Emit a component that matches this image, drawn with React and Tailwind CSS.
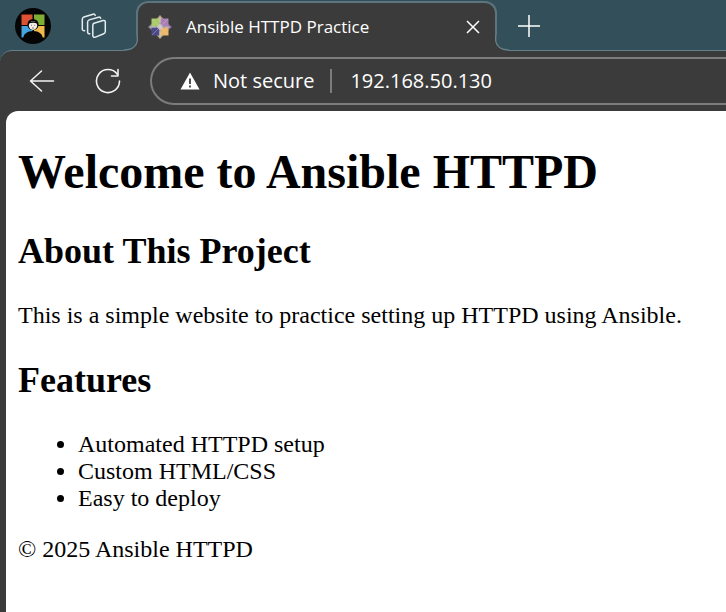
import React, { useState } from 'react';

const features = ['Automated HTTPD setup', 'Custom HTML/CSS', 'Easy to deploy'];

const ProfileIcon = () => (
  <svg viewBox="0 0 36 36" className="h-9 w-9" aria-hidden="true">
    <circle cx="18" cy="18" r="18" fill="#050505" />
    <path d="M6.500 6.500h11v10.500h-11z" fill="#dd5233" />
    <path d="M19 6.500h10.500V17H19z" fill="#7fae35" />
    <path d="M6.500 18h11v11.500h-11z" fill="#45a3e0" />
    <path d="M19 18h10.500v11.500H19z" fill="#f0b94a" />
    <path d="M8 31c.5-5 4-8 10-8s9.500 3 10 8c-5 4-15 4-20 0z" fill="#050505" />
    <circle cx="18" cy="16.500" r="5.600" fill="#050505" />
    <ellipse cx="18" cy="17.500" rx="4.200" ry="4.400" fill="#f4efe9" />
    <path d="M13.500 15.500c1-3 8-3 9 0-3-1-6-1-9 0z" fill="#050505" />
    <path d="M16 17.300h1M19.200 17.300h1M17 20h2" stroke="#555" strokeWidth="0.800" />
  </svg>
);

const WorkspacesIcon = () => (
  <svg viewBox="0 0 26 26" className="h-[26px] w-[26px]" fill="none" stroke="#e6ecee" strokeWidth="1.500" strokeLinejoin="round" strokeLinecap="round" aria-hidden="true">
    <path d="M13 10.200l9-2.700c1.300-.4 2.300.3 2.300 1.600v9.400c0 1.100-.6 1.900-1.600 2.300l-8.200 3.300c-1.600.6-2.700-.1-2.700-1.600v-10c0-1.200.3-1.900 1.200-2.300z" />
    <path d="M8.800 20.800c-1.400.1-2.200-.6-2.200-1.900V9.200c0-1.200.5-1.900 1.600-2.300l9.300-2.700c1.200-.3 1.900.1 2.200 1" />
    <path d="M3.600 17.700c-1.500.1-2.300-.6-2.300-1.900V6.300c0-1.200.5-1.900 1.600-2.300L12 1.200c1.200-.3 1.900.1 2.200 1" />
  </svg>
);

const Favicon = () => (
  <svg viewBox="0 0 24 24" className="h-6 w-6 shrink-0" aria-hidden="true">
    <path d="M12 0l3.500 4L12 8.500 8.500 4z" fill="#b59c7c" />
    <path d="M24 12l-4 3.500-4.500-3.500L20 8.500z" fill="#86689a" />
    <path d="M12 24l-3.500-4 3.500-4.500 3.500 4.500z" fill="#b5a987" />
    <path d="M0 12l4-3.500L8.500 12 4 15.500z" fill="#8f88a3" />
    <path d="M3.500 3.500h8v8h-8z" fill="#a9cc66" />
    <path d="M12.500 3.500h8v8h-8z" fill="#a880b4" />
    <path d="M3.500 12.500h8v8h-8z" fill="#4b4988" />
    <path d="M12.500 12.500h8v8h-8z" fill="#edb766" />
    <path d="M4 4l16 16M20 4L4 20" stroke="#ddd5d2" strokeWidth="0.700" opacity="0.500" />
    <path d="M12 2v20M2 12h20" stroke="#ddd5d8" strokeWidth="1.200" opacity="0.800" />
    <path d="M12 8.500l3.500 3.500-3.500 3.500L8.500 12z" fill="#dcd3d8" opacity="0.700" />
  </svg>
);

const TabFlare = ({ className }) => (
  <svg viewBox="0 0 14 16" className={`absolute bottom-0 h-4 w-[14px] ${className}`} aria-hidden="true">
    <path d="M14 16H0v-1c8 0 12-4 12.500-12V0H14z" fill="#3b3b3b" />
    <path d="M0 15c8 0 13.500-4 13.500-12V0" fill="none" stroke="#64808a" strokeWidth="1.500" />
  </svg>
);

const TabBar = () => (
  <div className="flex h-[51px] bg-[#33505a]">
    <div className="flex w-[136px] shrink-0 items-center gap-[30px] pl-[15px]">
      <button type="button" aria-label="Profile">
        <ProfileIcon />
      </button>
      <button type="button" aria-label="Workspaces">
        <WorkspacesIcon />
      </button>
    </div>
    <div className="relative z-10 mt-px flex w-[361px] items-center rounded-t-xl border-2 border-b-0 border-[#5b747d] bg-[#3b3b3b] pr-[11px] pl-[10px]">
      <TabFlare className="-left-[14px]" />
      <Favicon />
      <span className="ml-[14px] flex-1 truncate text-[17px] leading-6 text-white">Ansible HTTPD Practice</span>
      <button type="button" aria-label="Close tab" className="p-1">
        <svg viewBox="0 0 14 14" className="h-[14px] w-[14px]" stroke="#fff" strokeWidth="1.500" aria-hidden="true">
          <path d="M1 1l12 12M13 1L1 13" />
        </svg>
      </button>
      <TabFlare className="-right-[14px] -scale-x-100" />
    </div>
    <button type="button" aria-label="New tab" className="ml-[21px] self-center">
      <svg viewBox="0 0 22 22" className="h-[22px] w-[22px]" stroke="#fff" strokeWidth="1.500" aria-hidden="true">
        <path d="M11 0v22M0 11h22" />
      </svg>
    </button>
  </div>
);

const Toolbar = () => {
  const [address, setAddress] = useState('192.168.50.130');

  return (
    <div className="-mt-px flex h-[61px] items-center rounded-tl-xl border-t border-[#64808a] bg-[#3b3b3b] pl-[29px]">
      <button type="button" aria-label="Back">
        <svg viewBox="0 0 26 24" className="h-6 w-[26px]" fill="none" stroke="#f2f2f2" strokeWidth="1.500" strokeLinecap="round" strokeLinejoin="round" aria-hidden="true">
          <path d="M24.500 12H1.500M12.500 2L1.500 12l11 10" />
        </svg>
      </button>
      <button type="button" aria-label="Refresh" className="ml-10">
        <svg viewBox="0 0 26 26" className="h-[26px] w-[26px]" fill="none" stroke="#f2f2f2" strokeWidth="1.600" strokeLinecap="round" strokeLinejoin="round" aria-hidden="true">
          <path d="M24.500 13A11.500 11.500 0 1 1 22.300 6.300" />
          <path d="M23 1.500V8h-6.500" />
        </svg>
      </button>
      <div className="ml-[29px] flex h-12 min-w-0 flex-1 items-center rounded-l-full border-2 border-r-0 border-[#7c7c7c] pl-7">
        <button type="button" className="flex shrink-0 items-center gap-[13px] text-[20px] leading-7 text-white">
          <svg viewBox="0 0 20 18" className="h-[18px] w-5" aria-hidden="true">
            <path d="M10 .5L19.500 17.500H.5z" fill="#fff" />
            <path d="M10 6.500v5.500M10 13.500v2" stroke="#3b3b3b" strokeWidth="1.800" />
          </svg>
          Not secure
        </button>
        <span className="mr-[18px] ml-4 h-6 w-[2px] shrink-0 bg-[#7c7c7c]" />
        <input
          type="text"
          aria-label="Address"
          value={address}
          onChange={(e) => setAddress(e.target.value)}
          className="min-w-0 flex-1 bg-transparent text-[20px] leading-7 text-white outline-none"
        />
      </div>
    </div>
  );
};

const App = () => {
  return (
    <div className="flex min-h-screen flex-col bg-[#3b3b3b] font-['Open_Sans',sans-serif]">
      <header className="bg-[#33505a]">
        <TabBar />
        <Toolbar />
      </header>

      <main className="ml-[6px] flex-1 rounded-tl-xl bg-white px-3 pb-6 font-['Liberation_Serif',serif] text-2xl leading-[27px] text-black">
        <h1 className="mt-[33px] text-5xl leading-[55px] font-bold">Welcome to Ansible HTTPD</h1>
        <h2 className="mt-8 text-4xl leading-[41px] font-bold">About This Project</h2>
        <p className="mt-[30px]">This is a simple website to practice setting up HTTPD using Ansible.</p>
        <h2 className="mt-[31px] text-4xl leading-[41px] font-bold">Features</h2>
        <ul className="mt-[30px] list-disc pl-[60px]">
          {features.map((feature) => (
            <li key={feature}>{feature}</li>
          ))}
        </ul>
        <footer className="mt-6">© 2025 Ansible HTTPD</footer>
      </main>
    </div>
  );
};

export default App;
